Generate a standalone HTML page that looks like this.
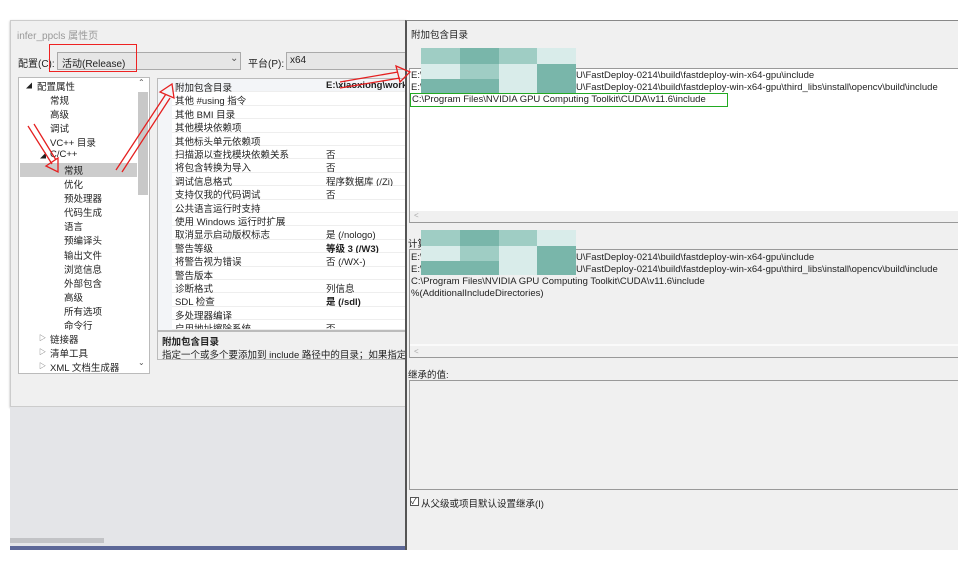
<!DOCTYPE html>
<html><head><meta charset="utf-8"><style>
*{margin:0;padding:0;box-sizing:border-box}
body{width:979px;height:566px;background:#fff;position:relative;overflow:hidden;font-family:"Liberation Sans","Noto Sans CJK SC",sans-serif;font-size:9.5px;color:#222}
.a{position:absolute;white-space:nowrap}
.dlg{position:absolute;background:#f0f0f0}
.row{position:absolute;left:172px;width:233px;height:13.4px;border-bottom:1px solid #eee;background:#fff}
.row span{position:absolute;left:3px;top:1px}
.row b{position:absolute;left:154px;top:1px;font-weight:normal}
</style></head><body>
<!-- left dialog -->
<div class="dlg" style="left:10px;top:20px;width:396px;height:387px;border:1px solid #ccc;border-right:none;box-shadow:0 1px 2px #aaa"></div>
<div class="a" style="left:10px;top:407px;width:396px;height:140px;background:#e4e5e8"></div>
<div class="a" style="left:10px;top:538px;width:94px;height:5px;background:#c2c3c6"></div>
<div class="a" style="left:10px;top:546px;width:396px;height:4px;background:#5c6797"></div>
<div class="a" style="left:17px;top:27px;color:#999;font-size:10px">infer_ppcls 属性页</div>
<div class="a" style="left:18px;top:55px;font-size:10px">配置(C):</div>
<div class="a" style="left:57px;top:52px;width:184px;height:18px;background:#e6e6e6;border:1px solid #aaa"></div>
<div class="a" style="left:62px;top:55px;font-size:10px">活动(Release)</div>
<div class="a" style="left:230px;top:53px;font-size:10px;color:#555">⌄</div>
<div class="a" style="left:49px;top:44px;width:88px;height:28px;border:1px solid #e22"></div>
<div class="a" style="left:248px;top:55px;font-size:10px">平台(P):</div>
<div class="a" style="left:286px;top:52px;width:120px;height:18px;background:#e6e6e6;border:1px solid #aaa"></div>
<div class="a" style="left:290px;top:55px;font-size:10px">x64</div>
<!-- tree -->
<div class="a" style="left:18px;top:77px;width:132px;height:297px;background:#fff;border:1px solid #bbb"></div>
<div class="a" style="left:137px;top:92px;width:11px;height:24px;"></div>
<div class="a" style="left:138px;top:92px;width:10px;height:103px;background:#c8c8c8"></div>
<div class="a" style="left:138px;top:78px;font-size:8px;color:#555">⌃</div>
<div class="a" style="left:138px;top:358px;font-size:8px;color:#555">⌄</div>
<div class="a" style="left:20px;top:163px;width:117px;height:14px;background:#ccc"></div>
<div class="a" style="left:26px;top:81px;font-size:6px">◢</div>
<div class="a" style="left:37px;top:79px">配置属性</div>
<div class="a" style="left:50px;top:93px">常规</div>
<div class="a" style="left:50px;top:107px">高级</div>
<div class="a" style="left:50px;top:121px">调试</div>
<div class="a" style="left:50px;top:135px">VC++ 目录</div>
<div class="a" style="left:40px;top:151px;font-size:6px">◢</div>
<div class="a" style="left:50px;top:149px">C/C++</div>
<div class="a" style="left:64px;top:163px">常规</div>
<div class="a" style="left:64px;top:177px">优化</div>
<div class="a" style="left:64px;top:191px">预处理器</div>
<div class="a" style="left:64px;top:205px">代码生成</div>
<div class="a" style="left:64px;top:219px">语言</div>
<div class="a" style="left:64px;top:233px">预编译头</div>
<div class="a" style="left:64px;top:248px">输出文件</div>
<div class="a" style="left:64px;top:262px">浏览信息</div>
<div class="a" style="left:64px;top:276px">外部包含</div>
<div class="a" style="left:64px;top:290px">高级</div>
<div class="a" style="left:64px;top:304px">所有选项</div>
<div class="a" style="left:64px;top:318px">命令行</div>
<div class="a" style="left:39px;top:333px;font-size:7px;color:#555">▷</div><div class="a" style="left:50px;top:332px">链接器</div>
<div class="a" style="left:39px;top:347px;font-size:7px;color:#555">▷</div><div class="a" style="left:50px;top:346px">清单工具</div>
<div class="a" style="left:39px;top:361px;font-size:7px;color:#555">▷</div><div class="a" style="left:50px;top:360px">XML 文档生成器</div>
<!-- grid -->
<div class="a" style="left:157px;top:78px;width:249px;height:253px;background:#f3f5f8;border:1px solid #bbb;border-right:none;overflow:hidden">
<div class="a" style="left:167px;top:0;width:1px;height:253px;background:#e5e5e5"></div>
</div>
<div id="g"></div>
<div class="a" style="left:157px;top:331px;width:249px;height:29px;background:#f0f0f0;border:1px solid #bbb;border-right:none"></div>
<div class="a" style="left:162px;top:334px;font-weight:bold">附加包含目录</div>
<div class="a" style="left:162px;top:347px">指定一个或多个要添加到 include 路径中的目录；如果指定多个，</div>
<!-- right dialog -->
<div class="dlg" style="left:405px;top:20px;width:553px;height:530px;border-left:2px solid #555;border-top:1px solid #888"></div>
<div class="a" style="left:411px;top:27px">附加包含目录</div>
<div class="a" style="left:409px;top:68px;width:549px;height:155px;background:#fff;border:1px solid #999;border-right:none"></div>
<div class="a" style="left:410px;top:211px;width:548px;height:11px;background:#f0f0f0"></div>
<div class="a" style="left:414px;top:211px;font-size:8px;color:#aaa">&lt;</div>
<div class="a" style="left:411px;top:70px">E:\</div>
<div class="a" style="left:576px;top:70px">U\FastDeploy-0214\build\fastdeploy-win-x64-gpu\include</div>
<div class="a" style="left:411px;top:82px">E:\</div>
<div class="a" style="left:576px;top:82px">U\FastDeploy-0214\build\fastdeploy-win-x64-gpu\third_libs\install\opencv\build\include</div>
<div class="a" style="left:412px;top:94px">C:\Program Files\NVIDIA GPU Computing Toolkit\CUDA\v11.6\include</div>
<div class="a" style="left:410px;top:93px;width:318px;height:14px;border:1px solid #2a2"></div>
<div class="a" style="left:408px;top:236px">计算的值</div>
<div class="a" style="left:409px;top:249px;width:549px;height:109px;border:1px solid #999;border-right:none"></div>
<div class="a" style="left:411px;top:252px">E:\</div>
<div class="a" style="left:576px;top:252px">U\FastDeploy-0214\build\fastdeploy-win-x64-gpu\include</div>
<div class="a" style="left:411px;top:264px">E:\</div>
<div class="a" style="left:576px;top:264px">U\FastDeploy-0214\build\fastdeploy-win-x64-gpu\third_libs\install\opencv\build\include</div>
<div class="a" style="left:411px;top:276px">C:\Program Files\NVIDIA GPU Computing Toolkit\CUDA\v11.6\include</div>
<div class="a" style="left:411px;top:288px">%(AdditionalIncludeDirectories)</div>
<div class="a" style="left:410px;top:344px;width:548px;height:13px;border-top:2px solid #fafafa"></div>
<div class="a" style="left:414px;top:347px;font-size:8px;color:#aaa">&lt;</div>
<div class="a" style="left:408px;top:367px">继承的值:</div>
<div class="a" style="left:409px;top:380px;width:549px;height:110px;border:1px solid #999;border-right:none"></div>
<div class="a" style="left:410px;top:497px;width:9px;height:9px;border:1px solid #555;background:#fff;font-size:8px;line-height:7px">✓</div>
<div class="a" style="left:421px;top:496px">从父级或项目默认设置继承(I)</div>
<!-- mosaics -->
<svg class="a" style="left:0;top:0" width="979" height="566">
<g id="m">
<rect x="421" y="48" width="39" height="16" fill="#9fcdc4"/><rect x="460" y="48" width="39" height="16" fill="#79b6aa"/><rect x="499" y="48" width="38" height="16" fill="#9fcdc4"/><rect x="537" y="48" width="39" height="16" fill="#d9ecea"/>
<rect x="421" y="64" width="39" height="15" fill="#d9ecea"/><rect x="460" y="64" width="39" height="15" fill="#9fcdc4"/><rect x="499" y="64" width="38" height="15" fill="#d9ecea"/><rect x="537" y="64" width="39" height="15" fill="#79b6aa"/>
<rect x="421" y="79" width="78" height="14" fill="#79b6aa"/><rect x="499" y="79" width="38" height="14" fill="#d9ecea"/><rect x="537" y="79" width="39" height="14" fill="#79b6aa"/>
</g>
<use href="#m" y="182"/>
<g fill="none" stroke="#e52020" stroke-width="1.3">
<path d="M28 126 L52 164 M34 124 L56 160 M46 166 L58 172 L58 158 Z"/>
<path d="M116 170 L166 94 M122 172 L170 98 M160 92 L172 84 L174 98 Z"/>
<path d="M340 82 L398 72 M340 88 L400 78 M396 66 L410 72 L400 82 Z"/>
</g>
</svg>
<script>
var r=[["附加包含目录","E:\\xiaoxiong\\work"],["其他 #using 指令",""],["其他 BMI 目录",""],["其他模块依赖项",""],["其他标头单元依赖项",""],["扫描源以查找模块依赖关系","否"],["将包含转换为导入","否"],["调试信息格式","程序数据库 (/Zi)"],["支持仅我的代码调试","否"],["公共语言运行时支持",""],["使用 Windows 运行时扩展",""],["取消显示启动版权标志","是 (/nologo)"],["警告等级","等级 3 (/W3)"],["将警告视为错误","否 (/WX-)"],["警告版本",""],["诊断格式","列信息 (/diagnostics"],["SDL 检查","是 (/sdl)"],["多处理器编译",""],["启用地址擦除系统","否"]];
var h="";r.forEach(function(x,i){var bold=(i==0||i==12||i==16)?"font-weight:bold;":"";var bg=i==0?"background:#f3f5f8;":"";var top=79+i*13.4;if(i==18)h+='<div class="row" style="top:'+top+'px;height:10px;overflow:hidden"><span>'+x[0]+'</span><b>'+x[1]+'</b></div>';else h+='<div class="row" style="top:'+top+'px;'+bg+'"><span>'+x[0]+'</span><b style="'+bold+'">'+x[1]+'</b></div>'});document.getElementById("g").innerHTML=h;
</script>
</body></html>
